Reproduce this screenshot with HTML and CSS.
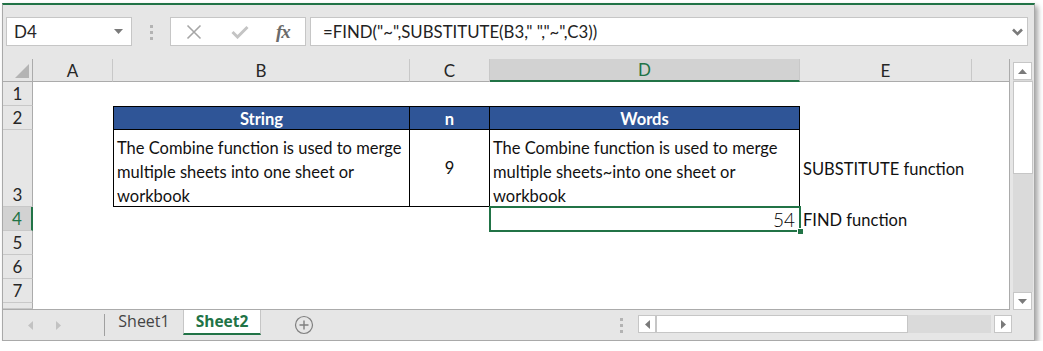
FILE: index.html
```html
<!DOCTYPE html>
<html>
<head>
<meta charset="utf-8">
<link rel="stylesheet" href="styles.css">
</head>
<body>
<div class="window">
  <div class="fbar">
    <div class="namebox">
      <span>D4</span>
      <svg width="9" height="5" viewBox="0 0 9 5"><path d="M0 0H9L4.5 5Z" fill="#7a7a7a"/></svg>
    </div>
    <div class="grip"><i></i><i></i><i></i></div>
    <div class="fxbox">
      <svg class="ico" width="16" height="16" viewBox="0 0 16 16"><path d="M1.5 1.5L14.5 14.5M14.5 1.5L1.5 14.5" stroke="#a6a6a6" stroke-width="1.6" fill="none"/></svg>
      <svg class="ico" width="18" height="14" viewBox="0 0 18 14"><path d="M1.5 7L6.5 12L16.5 2" stroke="#c4c4c4" stroke-width="3" fill="none"/></svg>
      <span class="fx">fx</span>
    </div>
    <div class="formula">
      <span>=FIND("~",SUBSTITUTE(B3," ","~",C3))</span>
      <svg width="11" height="8" viewBox="0 0 11 8"><path d="M1 1.5L5.5 6L10 1.5" stroke="#7a7a7a" stroke-width="2.6" fill="none"/></svg>
    </div>
  </div>

  <div class="main">
    <div class="sheet">
      <div class="corner"><span class="tri"></span></div>
      <div class="ch">A</div>
      <div class="ch">B</div>
      <div class="ch">C</div>
      <div class="ch sel">D</div>
      <div class="ch">E</div>
      <div class="ch last"></div>

      <div class="rh">1</div>
      <div class="c"></div><div class="c"></div><div class="c"></div><div class="c"></div><div class="c"></div><div class="c"></div>

      <div class="rh">2</div>
      <div class="c"></div>
      <div class="c tb th tl tt">String</div>
      <div class="c tb th tt">n</div>
      <div class="c tb th tt">Words</div>
      <div class="c"></div><div class="c"></div>

      <div class="rh">3</div>
      <div class="c"></div>
      <div class="c tb txt tl">The Combine function is used to merge multiple sheets into one sheet or workbook</div>
      <div class="c tb num">9</div>
      <div class="c tb txt">The Combine function is used to merge multiple sheets~into one sheet or workbook</div>
      <div class="c note">SUBSTITUTE function</div>
      <div class="c"></div>

      <div class="rh selr">4</div>
      <div class="c"></div><div class="c"></div><div class="c"></div>
      <div class="c active"><span class="val">54</span><span class="handle"></span></div>
      <div class="c note">FIND function</div>
      <div class="c"></div>

      <div class="rh">5</div>
      <div class="c"></div><div class="c"></div><div class="c"></div><div class="c"></div><div class="c"></div><div class="c"></div>
      <div class="rh">6</div>
      <div class="c"></div><div class="c"></div><div class="c"></div><div class="c"></div><div class="c"></div><div class="c"></div>
      <div class="rh">7</div>
      <div class="c"></div><div class="c"></div><div class="c"></div><div class="c"></div><div class="c"></div><div class="c"></div>
      <div class="rh"></div>
      <div class="c"></div><div class="c"></div><div class="c"></div><div class="c"></div><div class="c"></div><div class="c"></div>
    </div>
    <div class="vscroll">
      <div class="sbtn"><svg width="9" height="5" viewBox="0 0 9 5"><path d="M0 5H9L4.5 0Z" fill="#7a7a7a"/></svg></div>
      <div class="vtrack"><div class="vthumb"></div></div>
      <div class="sbtn"><svg width="9" height="5" viewBox="0 0 9 5"><path d="M0 0H9L4.5 5Z" fill="#7a7a7a"/></svg></div>
    </div>
  </div>

  <div class="tabbar">
    <div class="nav">
      <svg width="5" height="9" viewBox="0 0 5 9"><path d="M5 0V9L0 4.5Z" fill="#c2c2c2"/></svg>
      <svg width="5" height="9" viewBox="0 0 5 9"><path d="M0 0V9L5 4.5Z" fill="#c2c2c2"/></svg>
    </div>
    <div class="tsep"></div>
    <div class="tab">Sheet1</div>
    <div class="tab on">Sheet2</div>
    <div class="add">
      <svg width="20" height="20" viewBox="0 0 20 20"><circle cx="10" cy="10" r="8.5" stroke="#7f7f7f" stroke-width="1.2" fill="none"/><path d="M10 5.5V14.5M5.5 10H14.5" stroke="#7f7f7f" stroke-width="1.4"/></svg>
    </div>
    <div class="spacer"></div>
    <div class="grip hgrip"><i></i><i></i><i></i></div>
    <div class="hscroll">
      <div class="sbtn h"><svg width="5" height="9" viewBox="0 0 5 9"><path d="M5 0V9L0 4.5Z" fill="#7a7a7a"/></svg></div>
      <div class="htrack"><div class="hthumb"></div></div>
      <div class="sbtn h"><svg width="5" height="9" viewBox="0 0 5 9"><path d="M0 0V9L5 4.5Z" fill="#7a7a7a"/></svg></div>
    </div>
  </div>
</div>
</body>
</html>
```
FILE: styles.css
```css
* { box-sizing: border-box; }
body {
  margin: 0;
  background: #ffffff;
  font-family: Lato, "Liberation Sans", sans-serif;
  color: #222;
}
.window {
  margin: 3px 0 0 2px;
  width: 1033px;
  height: 338px;
  border: 1px solid #a9a9a9;
  border-top: 2px solid #217346;
  background: #e6e6e6;
  box-shadow: 3px 3px 5px rgba(0,0,0,0.35);
  display: flex;
  flex-direction: column;
}

/* formula bar */
.fbar {
  height: 54px;
  flex: none;
  display: flex;
  align-items: flex-start;
  padding: 12px 0 0 3px;
}
.namebox {
  width: 126px;
  height: 29px;
  background: #fff;
  border: 1px solid #c6c6c6;
  display: flex;
  align-items: center;
  justify-content: space-between;
  padding: 0 8px 0 7px;
  font-size: 17px;
  color: #262626;
}
.grip {
  display: flex;
  flex-direction: column;
  gap: 3px;
  margin: 8px 0 0 18px;
}
.grip i {
  display: block;
  width: 3px;
  height: 3px;
  background: #b3b3b3;
}
.fxbox {
  margin-left: 17px;
  width: 136px;
  height: 29px;
  background: #fff;
  border: 1px solid #c6c6c6;
  display: flex;
  align-items: center;
  padding-left: 15px;
}
.fxbox .ico:nth-child(2) { margin-left: 29px; }
.fx {
  margin-left: 27px;
  font-family: "Liberation Serif", serif;
  font-style: italic;
  font-weight: bold;
  font-size: 19px;
  color: #6b6b6b;
  letter-spacing: -1px;
}
.formula {
  margin-left: 4px;
  width: 718px;
  height: 29px;
  background: #fff;
  border: 1px solid #c6c6c6;
  display: flex;
  align-items: center;
  justify-content: space-between;
  padding: 0 4px 0 12px;
  font-size: 16.8px;
  color: #222;
}

/* sheet */
.main {
  height: 251px;
  flex: none;
  display: flex;
}
.sheet {
  width: 1007px;
  height: 251px;
  border-right: 1px solid #ababab;
  border-bottom: 1px solid #ababab;
  display: grid;
  grid-template-columns: 30px 80px 297px 80px 310px 172px 1fr;
  grid-template-rows: 23px 24px 24px 77px 24px 24px 24px 24px 1fr;
  overflow: hidden;
  background: #fff;
}
.corner {
  background: #e6e6e6;
  border-right: 1px solid #ababab;
  border-bottom: 1px solid #ababab;
  position: relative;
}
.tri {
  position: absolute;
  right: 3px;
  bottom: 3px;
  width: 0;
  height: 0;
  border-left: 14px solid transparent;
  border-bottom: 14px solid #b4b4b4;
}
.ch {
  background: #e6e6e6;
  border-right: 1px solid #c8c8c8;
  border-bottom: 1px solid #ababab;
  display: flex;
  align-items: center;
  justify-content: center;
  font-size: 17px;
  color: #262626;
}
.ch.sel {
  background: #d2d2d2;
  color: #217346;
  border-bottom: 2px solid #217346;
}
.ch.last { border-right: none; }
.rh {
  background: #e6e6e6;
  border-right: 1px solid #ababab;
  border-bottom: 1px solid #c8c8c8;
  display: flex;
  align-items: flex-end;
  justify-content: center;
  font-size: 17px;
  line-height: 22px;
  color: #262626;
}
.rh.selr {
  background: #d2d2d2;
  color: #217346;
  border-right: 2px solid #217346;
}
.c {
  background: #fff;
  font-size: 16.5px;
  color: #111;
  min-width: 0;
}
.tb {
  border-right: 1px solid #000;
  border-bottom: 1px solid #000;
}
.tl { border-left: 1px solid #000; }
.tt { border-top: 1px solid #000; }
.th {
  background: #2f5597;
  color: #fff;
  font-weight: bold;
  display: flex;
  align-items: center;
  justify-content: center;
  padding-top: 1px;
}
.txt {
  padding: 6px 2px 0 3px;
  line-height: 24px;
}
.num {
  display: flex;
  align-items: center;
  justify-content: center;
}
.note {
  display: flex;
  align-items: center;
  padding: 1px 0 0 3px;
  white-space: nowrap;
}
.active {
  position: relative;
  display: flex;
  align-items: center;
  justify-content: flex-end;
  padding-right: 5px;
}
.active::after {
  content: "";
  position: absolute;
  left: -1px;
  top: -1px;
  right: -1px;
  bottom: -1px;
  border: 2px solid #217346;
}
.val {
  font-size: 19px;
  font-weight: 300;
  color: #000;
}
.handle {
  position: absolute;
  right: -4px;
  bottom: -4px;
  width: 7px;
  height: 7px;
  background: #217346;
  border: 1px solid #fff;
  z-index: 1;
}

/* vertical scroll */
.vscroll {
  width: 24px;
  display: flex;
  flex-direction: column;
  padding: 3px 1px 0 3px;
}
.sbtn {
  width: 19px;
  height: 18px;
  background: #fff;
  border: 1px solid #c6c6c6;
  display: flex;
  align-items: center;
  justify-content: center;
  flex: none;
}
.vtrack {
  flex: 1;
  background: #dadada;
  padding-top: 1px;
}
.vthumb {
  height: 93px;
  background: #fff;
  border: 1px solid #c6c6c6;
}

/* tab bar */
.tabbar {
  height: 30px;
  flex: none;
  display: flex;
  align-items: flex-start;
}
.nav {
  width: 101px;
  display: flex;
  gap: 23px;
  padding: 11px 0 0 25px;
}
.tsep {
  width: 1px;
  height: 22px;
  margin-top: 4px;
  background: #a0a0a0;
}
.tab {
  width: 78px;
  height: 25px;
  display: flex;
  align-items: center;
  justify-content: center;
  font-family: "Open Sans", "Noto Sans", sans-serif;
  font-size: 16px;
  color: #444;
  padding-bottom: 3px;
}
.tab.on {
  background: #fff;
  border-left: 1px solid #c6c6c6;
  border-right: 1px solid #c6c6c6;
  border-bottom: 2px solid #217346;
  color: #217346;
  font-weight: bold;
  font-size: 15.5px;
  padding-bottom: 1px;
}
.add {
  margin: 5px 0 0 33px;
  display: flex;
}
.spacer { flex: 1; }
.hgrip {
  margin: 8px 0 0 0;
}
.hscroll {
  display: flex;
  margin: 5px 22px 0 15px;
  width: 374px;
}
.sbtn.h {
  width: 18px;
}
.htrack {
  flex: 1;
  background: #dadada;
  margin-right: 3px;
  display: flex;
}
.hthumb {
  width: 252px;
  background: #fff;
  border: 1px solid #c6c6c6;
}
```
